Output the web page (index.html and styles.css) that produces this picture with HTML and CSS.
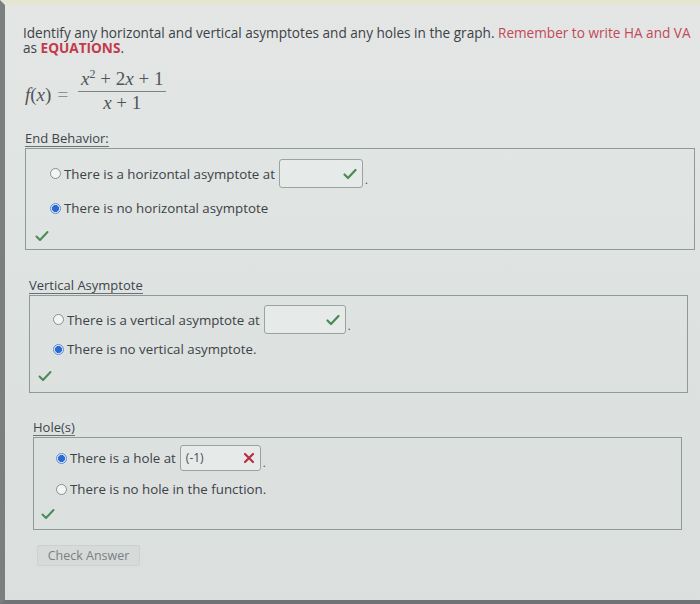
FILE: index.html
```html
<!DOCTYPE html>
<html>
<head>
<meta charset="utf-8">
<link rel="stylesheet" href="styles.css">
</head>
<body>
<div class="screen">
  <p class="prompt">Identify any horizontal and vertical asymptotes and any holes in the graph. <span class="warn">Remember to write HA and VA</span><br>as <b class="warn">EQUATIONS</b>.</p>

  <div class="formula">
    <span class="fx"><i>f</i>(<i>x</i>)</span>
    <span class="eq">=</span>
    <span class="frac">
      <span class="num"><i>x</i><sup>2</sup> + 2<i>x</i> + 1</span>
      <span class="den"><i>x</i> + 1</span>
    </span>
  </div>

  <section class="part part-end">
    <div class="label">End Behavior:</div>
    <div class="box">
      <div class="opt opt-first">
        <span class="radio"></span>
        <span class="opt-text">There is a horizontal asymptote at</span>
        <span class="field field-end">
          <svg class="ok" width="14" height="12" viewBox="0 0 14 12"><polyline points="1.5,6.5 5,10 12.5,2" fill="none" stroke="#4a8a58" stroke-width="2.2" stroke-linecap="round" stroke-linejoin="round"/></svg>
        </span>
        <span class="dot">.</span>
      </div>
      <div class="opt opt-second">
        <span class="radio on"></span>
        <span class="opt-text">There is no horizontal asymptote</span>
      </div>
      <svg class="mark" width="14" height="12" viewBox="0 0 14 12"><polyline points="1.5,6.5 5,10 12.5,2" fill="none" stroke="#4a8a58" stroke-width="2" stroke-linecap="round" stroke-linejoin="round"/></svg>
    </div>
  </section>

  <section class="part part-va">
    <div class="label">Vertical Asymptote</div>
    <div class="box">
      <div class="opt opt-first">
        <span class="radio"></span>
        <span class="opt-text">There is a vertical asymptote at</span>
        <span class="field field-va">
          <svg class="ok" width="14" height="12" viewBox="0 0 14 12"><polyline points="1.5,6.5 5,10 12.5,2" fill="none" stroke="#4a8a58" stroke-width="2.2" stroke-linecap="round" stroke-linejoin="round"/></svg>
        </span>
        <span class="dot">.</span>
      </div>
      <div class="opt opt-second">
        <span class="radio on"></span>
        <span class="opt-text">There is no vertical asymptote.</span>
      </div>
      <svg class="mark" width="14" height="12" viewBox="0 0 14 12"><polyline points="1.5,6.5 5,10 12.5,2" fill="none" stroke="#4a8a58" stroke-width="2" stroke-linecap="round" stroke-linejoin="round"/></svg>
    </div>
  </section>

  <section class="part part-hole">
    <div class="label">Hole(s)</div>
    <div class="box">
      <div class="opt opt-first">
        <span class="radio on"></span>
        <span class="opt-text">There is a hole at</span>
        <span class="field field-hole">
          <span class="val">(-1)</span>
          <svg class="bad" width="12" height="12" viewBox="0 0 12 12"><path d="M2 2 L10 10 M10 2 L2 10" stroke="#b8303f" stroke-width="2.2" stroke-linecap="round"/></svg>
        </span>
        <span class="dot">.</span>
      </div>
      <div class="opt opt-second">
        <span class="radio"></span>
        <span class="opt-text">There is no hole in the function.</span>
      </div>
      <svg class="mark" width="14" height="12" viewBox="0 0 14 12"><polyline points="1.5,6.5 5,10 12.5,2" fill="none" stroke="#4a8a58" stroke-width="2" stroke-linecap="round" stroke-linejoin="round"/></svg>
    </div>
  </section>

  <button class="check">Check Answer</button>
</div>
</body>
</html>
```

FILE: styles.css
```css
html, body {
  margin: 0;
  padding: 0;
}
body {
  background: #dfe3e2;
  font-family: "Open Sans", "Lato", sans-serif;
  color: #3c4247;
}
.screen {
  box-sizing: border-box;
  height: 604px;
  border-left: 5px solid #7b7f80;
  border-top: 5px solid #e6e5d2;
  border-bottom: 4px solid #6f7375;
  padding: 20px 0 0 18px;
  background: linear-gradient(180deg, #e3e6e4 0%, #dde2e1 60%, #dbe0df 100%);
  overflow: hidden;
}
.prompt {
  margin: 0;
  font-size: 13.6px;
  line-height: 15px;
  white-space: nowrap;
}
.warn {
  color: #c2485a;
}
b.warn {
  font-weight: 700;
  color: #c23a4c;
}
.formula {
  display: flex;
  align-items: center;
  height: 42px;
  margin-top: 15px;
  margin-left: 2px;
  font-family: "Liberation Serif", "DejaVu Serif", serif;
  color: #50555a;
  font-size: 19px;
}
.fx {
  margin-top: 8px;
  line-height: 18px;
}
.eq {
  margin: 8px 10px 0 6px;
  line-height: 18px;
  color: #8c9194;
}
.frac {
  display: flex;
  flex-direction: column;
  align-items: center;
}
.num {
  line-height: 18px;
  padding: 0 3px 3px;
  border-bottom: 1px solid #7d8285;
}
.num sup {
  font-size: 12px;
  vertical-align: 7px;
  line-height: 0;
}
.den {
  line-height: 18px;
  padding-top: 2px;
}
.part .label {
  width: fit-content;
  font-size: 13px;
  line-height: 15px;
  color: #3e444a;
  border-bottom: 1px solid #6a7175;
}
.part .box {
  box-sizing: border-box;
  margin-top: 1px;
  border: 1px solid #8f9a96;
  display: flex;
  flex-direction: column;
  align-items: flex-start;
  padding-left: 24px;
}
.part-end {
  margin-top: 19px;
  margin-left: 2px;
}
.part-end .box {
  width: 670px;
  height: 102px;
  padding-top: 10px;
}
.part-end .opt-second { margin-top: 11px; }
.part-end .mark { margin-top: 13px; }

.part-va {
  margin-top: 28px;
  margin-left: 6px;
}
.part-va .box {
  width: 659px;
  height: 98px;
  padding-top: 9px;
  padding-left: 23px;
}
.part-va .opt-second { margin-top: 6px; }
.part-va .mark { margin-top: 12px; }

.part-hole {
  margin-top: 27px;
  margin-left: 10px;
}
.part-hole .box {
  width: 649px;
  height: 93px;
  padding-top: 7px;
  padding-left: 22px;
}
.part-hole .opt-second { margin-top: 9px; }
.part-hole .mark { margin-top: 10px; }

.opt {
  display: flex;
  align-items: center;
  font-size: 13.3px;
  line-height: 18px;
}
.radio {
  box-sizing: border-box;
  width: 11px;
  height: 11px;
  border-radius: 50%;
  border: 1px solid #8a908f;
  background: #f3f5f5;
  margin-right: 3px;
}
.radio.on {
  border: 1px solid #5d8fd8;
  background: radial-gradient(circle, #2f68cf 0 3.2px, #dbe6f6 3.8px);
}
.field {
  box-sizing: border-box;
  display: inline-flex;
  align-items: center;
  justify-content: flex-end;
  border: 1px solid #9aa3a0;
  border-radius: 3px;
  background: #e6eae9;
  margin-left: 4px;
  padding-right: 5px;
}
.field-end { width: 84px; height: 29px; }
.field-va { width: 82px; height: 29px; }
.field-hole {
  width: 81px;
  height: 26px;
  justify-content: space-between;
  padding-left: 5px;
  margin-left: 4px;
}
.val {
  font-size: 12px;
  color: #4a5055;
}
.dot {
  margin-left: 2px;
  align-self: flex-end;
  line-height: 16px;
  font-size: 11px;
}
.mark {
  margin-left: -15px;
}
.check {
  display: block;
  margin: 15px 0 0 14px;
  width: 103px;
  height: 21px;
  padding: 0;
  border: 1px solid #cdd1d0;
  border-radius: 2px;
  background: #d6dad9;
  color: #7b8082;
  font-family: "Open Sans", "Lato", sans-serif;
  font-size: 12.5px;
}
```
